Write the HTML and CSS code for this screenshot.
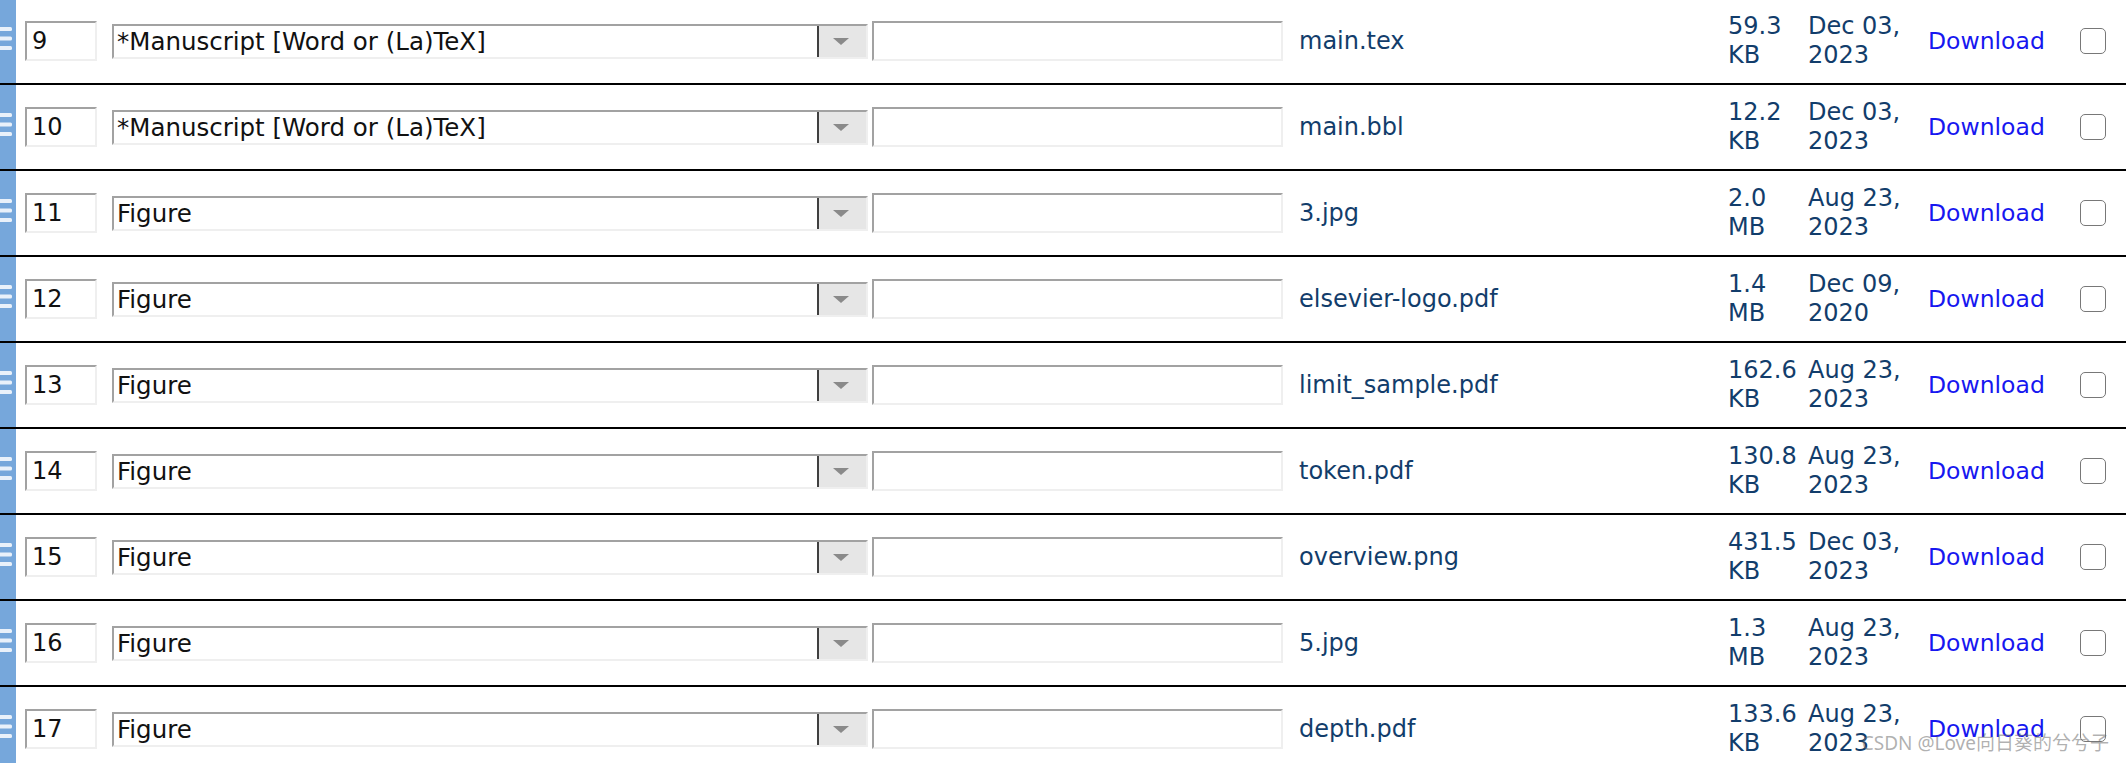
FILE: index.html
```html
<!DOCTYPE html>
<html lang="en">
<head>
<meta charset="utf-8">
<title>Files</title>
<link rel="stylesheet" href="styles.css">
</head>
<body>
<div class="list">
  <div class="row">
    <div class="handle"><svg class="grip" viewBox="0 0 12 24" width="12" height="24"><rect x="-2" y="0" width="14" height="4" rx="1.5"/><rect x="-2" y="9.5" width="14" height="4" rx="1.5"/><rect x="-2" y="19" width="14" height="4" rx="1.5"/></svg></div>
    <div class="cell"><input class="num" type="text" value="9"></div>
    <div class="cell"><div class="combo"><span class="combo-value">*Manuscript [Word or (La)TeX]</span><span class="combo-btn"><i class="tri"></i></span></div></div>
    <div class="cell"><input class="desc" type="text" value=""></div>
    <div class="cell name">main.tex</div>
    <div class="cell meta">59.3 KB</div>
    <div class="cell meta">Dec 03, 2023</div>
    <div class="cell"><a class="dl" href="#">Download</a></div>
    <div class="cell"><input class="chk" type="checkbox"></div>
  </div>
  <div class="row">
    <div class="handle"><svg class="grip" viewBox="0 0 12 24" width="12" height="24"><rect x="-2" y="0" width="14" height="4" rx="1.5"/><rect x="-2" y="9.5" width="14" height="4" rx="1.5"/><rect x="-2" y="19" width="14" height="4" rx="1.5"/></svg></div>
    <div class="cell"><input class="num" type="text" value="10"></div>
    <div class="cell"><div class="combo"><span class="combo-value">*Manuscript [Word or (La)TeX]</span><span class="combo-btn"><i class="tri"></i></span></div></div>
    <div class="cell"><input class="desc" type="text" value=""></div>
    <div class="cell name">main.bbl</div>
    <div class="cell meta">12.2 KB</div>
    <div class="cell meta">Dec 03, 2023</div>
    <div class="cell"><a class="dl" href="#">Download</a></div>
    <div class="cell"><input class="chk" type="checkbox"></div>
  </div>
  <div class="row">
    <div class="handle"><svg class="grip" viewBox="0 0 12 24" width="12" height="24"><rect x="-2" y="0" width="14" height="4" rx="1.5"/><rect x="-2" y="9.5" width="14" height="4" rx="1.5"/><rect x="-2" y="19" width="14" height="4" rx="1.5"/></svg></div>
    <div class="cell"><input class="num" type="text" value="11"></div>
    <div class="cell"><div class="combo"><span class="combo-value">Figure</span><span class="combo-btn"><i class="tri"></i></span></div></div>
    <div class="cell"><input class="desc" type="text" value=""></div>
    <div class="cell name">3.jpg</div>
    <div class="cell meta">2.0 MB</div>
    <div class="cell meta">Aug 23, 2023</div>
    <div class="cell"><a class="dl" href="#">Download</a></div>
    <div class="cell"><input class="chk" type="checkbox"></div>
  </div>
  <div class="row">
    <div class="handle"><svg class="grip" viewBox="0 0 12 24" width="12" height="24"><rect x="-2" y="0" width="14" height="4" rx="1.5"/><rect x="-2" y="9.5" width="14" height="4" rx="1.5"/><rect x="-2" y="19" width="14" height="4" rx="1.5"/></svg></div>
    <div class="cell"><input class="num" type="text" value="12"></div>
    <div class="cell"><div class="combo"><span class="combo-value">Figure</span><span class="combo-btn"><i class="tri"></i></span></div></div>
    <div class="cell"><input class="desc" type="text" value=""></div>
    <div class="cell name">elsevier-logo.pdf</div>
    <div class="cell meta">1.4 MB</div>
    <div class="cell meta">Dec 09, 2020</div>
    <div class="cell"><a class="dl" href="#">Download</a></div>
    <div class="cell"><input class="chk" type="checkbox"></div>
  </div>
  <div class="row">
    <div class="handle"><svg class="grip" viewBox="0 0 12 24" width="12" height="24"><rect x="-2" y="0" width="14" height="4" rx="1.5"/><rect x="-2" y="9.5" width="14" height="4" rx="1.5"/><rect x="-2" y="19" width="14" height="4" rx="1.5"/></svg></div>
    <div class="cell"><input class="num" type="text" value="13"></div>
    <div class="cell"><div class="combo"><span class="combo-value">Figure</span><span class="combo-btn"><i class="tri"></i></span></div></div>
    <div class="cell"><input class="desc" type="text" value=""></div>
    <div class="cell name">limit_sample.pdf</div>
    <div class="cell meta">162.6 KB</div>
    <div class="cell meta">Aug 23, 2023</div>
    <div class="cell"><a class="dl" href="#">Download</a></div>
    <div class="cell"><input class="chk" type="checkbox"></div>
  </div>
  <div class="row">
    <div class="handle"><svg class="grip" viewBox="0 0 12 24" width="12" height="24"><rect x="-2" y="0" width="14" height="4" rx="1.5"/><rect x="-2" y="9.5" width="14" height="4" rx="1.5"/><rect x="-2" y="19" width="14" height="4" rx="1.5"/></svg></div>
    <div class="cell"><input class="num" type="text" value="14"></div>
    <div class="cell"><div class="combo"><span class="combo-value">Figure</span><span class="combo-btn"><i class="tri"></i></span></div></div>
    <div class="cell"><input class="desc" type="text" value=""></div>
    <div class="cell name">token.pdf</div>
    <div class="cell meta">130.8 KB</div>
    <div class="cell meta">Aug 23, 2023</div>
    <div class="cell"><a class="dl" href="#">Download</a></div>
    <div class="cell"><input class="chk" type="checkbox"></div>
  </div>
  <div class="row">
    <div class="handle"><svg class="grip" viewBox="0 0 12 24" width="12" height="24"><rect x="-2" y="0" width="14" height="4" rx="1.5"/><rect x="-2" y="9.5" width="14" height="4" rx="1.5"/><rect x="-2" y="19" width="14" height="4" rx="1.5"/></svg></div>
    <div class="cell"><input class="num" type="text" value="15"></div>
    <div class="cell"><div class="combo"><span class="combo-value">Figure</span><span class="combo-btn"><i class="tri"></i></span></div></div>
    <div class="cell"><input class="desc" type="text" value=""></div>
    <div class="cell name">overview.png</div>
    <div class="cell meta">431.5 KB</div>
    <div class="cell meta">Dec 03, 2023</div>
    <div class="cell"><a class="dl" href="#">Download</a></div>
    <div class="cell"><input class="chk" type="checkbox"></div>
  </div>
  <div class="row">
    <div class="handle"><svg class="grip" viewBox="0 0 12 24" width="12" height="24"><rect x="-2" y="0" width="14" height="4" rx="1.5"/><rect x="-2" y="9.5" width="14" height="4" rx="1.5"/><rect x="-2" y="19" width="14" height="4" rx="1.5"/></svg></div>
    <div class="cell"><input class="num" type="text" value="16"></div>
    <div class="cell"><div class="combo"><span class="combo-value">Figure</span><span class="combo-btn"><i class="tri"></i></span></div></div>
    <div class="cell"><input class="desc" type="text" value=""></div>
    <div class="cell name">5.jpg</div>
    <div class="cell meta">1.3 MB</div>
    <div class="cell meta">Aug 23, 2023</div>
    <div class="cell"><a class="dl" href="#">Download</a></div>
    <div class="cell"><input class="chk" type="checkbox"></div>
  </div>
  <div class="row">
    <div class="handle"><svg class="grip" viewBox="0 0 12 24" width="12" height="24"><rect x="-2" y="0" width="14" height="4" rx="1.5"/><rect x="-2" y="9.5" width="14" height="4" rx="1.5"/><rect x="-2" y="19" width="14" height="4" rx="1.5"/></svg></div>
    <div class="cell"><input class="num" type="text" value="17"></div>
    <div class="cell"><div class="combo"><span class="combo-value">Figure</span><span class="combo-btn"><i class="tri"></i></span></div></div>
    <div class="cell"><input class="desc" type="text" value=""></div>
    <div class="cell name">depth.pdf</div>
    <div class="cell meta">133.6 KB</div>
    <div class="cell meta">Aug 23, 2023</div>
    <div class="cell"><a class="dl" href="#">Download</a></div>
    <div class="cell"><input class="chk" type="checkbox"></div>
  </div>
</div>
<div class="watermark">CSDN @Love向日葵的兮兮子</div>
</body>
</html>
```
FILE: styles.css
```css
html, body {
  margin: 0;
  padding: 0;
  overflow: hidden;
  background: #ffffff;
}
body {
  font-family: "DejaVu Sans", Verdana, sans-serif;
  font-size: 24px;
  line-height: 29px;
  color: #111111;
}
.list {
  margin-top: -1px;
}
.row {
  display: grid;
  grid-template-columns: 16px 96px 760px 427px 429px 80px 120px 152px 1fr;
  height: 86px;
  box-sizing: border-box;
  border-bottom: 2px solid #000000;
}
.handle {
  background: #76a7db;
  display: flex;
  align-items: center;
  justify-content: flex-start;
  padding-bottom: 4px;
  box-sizing: border-box;
}
.grip {
  display: block;
  fill: #e9f1fa;
}
.cell {
  display: flex;
  align-items: center;
  min-width: 0;
}
.num, .desc {
  box-sizing: border-box;
  height: 40px;
  margin: 0;
  padding: 0 5px;
  font-family: "DejaVu Sans", Verdana, sans-serif;
  font-size: 24px;
  color: #111111;
  background: #ffffff;
  border-style: solid;
  border-width: 2px;
  border-color: #a2a2a2 #efefef #efefef #a2a2a2;
  outline: none;
}
.num {
  width: 72px;
  margin-left: 9px;
}
.desc {
  width: 411px;
}
.combo {
  box-sizing: border-box;
  width: 756px;
  height: 35px;
  display: flex;
  align-items: stretch;
  border-style: solid;
  border-width: 2px;
  border-color: #a2a2a2 #efefef #efefef #a2a2a2;
  background: #ffffff;
  font-size: 24.5px;
}
.combo-value {
  flex: 1;
  padding-left: 3px;
  display: flex;
  align-items: center;
  color: #111111;
  white-space: nowrap;
}
.combo-btn {
  width: 47px;
  border-left: 2px solid #404040;
  background: #e6e6e6;
  display: flex;
  align-items: center;
  justify-content: center;
}
.tri {
  display: block;
  width: 0;
  height: 0;
  border-left: 8px solid transparent;
  border-right: 8px solid transparent;
  border-top: 7px solid #8a8a8a;
  margin-right: 3px;
}
.name, .meta {
  color: #123d6b;
}
.meta {
  padding-right: 4px;
}
.dl {
  color: #1717f0;
  font-size: 23.5px;
  text-decoration: none;
}
.chk {
  appearance: none;
  -webkit-appearance: none;
  box-sizing: border-box;
  width: 26px;
  height: 26px;
  margin: 0;
  border: 1.5px solid #787878;
  border-radius: 5px;
  background: #ffffff;
}
.watermark {
  position: absolute;
  right: 17px;
  bottom: 9px;
  font-family: "Noto Sans", "Noto Sans CJK SC", sans-serif;
  font-size: 19px;
  line-height: 22px;
  color: rgba(110, 110, 110, 0.55);
  pointer-events: none;
}
```
